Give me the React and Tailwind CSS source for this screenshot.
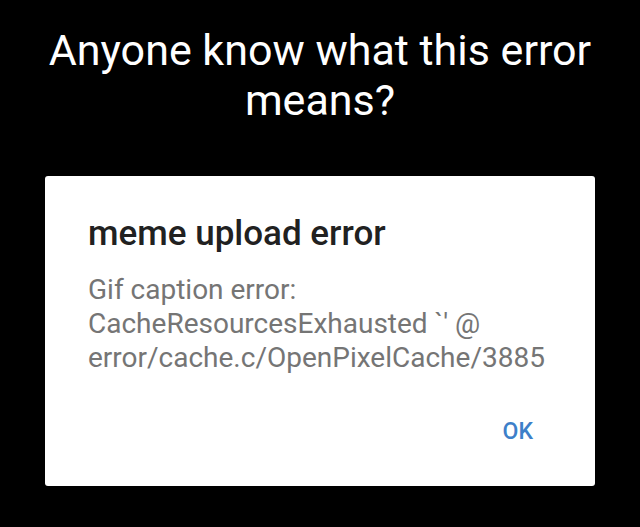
import React from "react";

const App = () => {
  return (
    <div
      className="w-[640px] h-[527px] bg-black overflow-hidden"
      style={{ fontFamily: "Roboto, 'Noto Sans', sans-serif" }}
    >
      <h1 className="pt-[25px] text-center text-white text-[43px] leading-[50px] px-6">
        Anyone know what this error means?
      </h1>

      <div className="mx-[45px] mt-[51px] w-[550px] h-[310px] bg-white rounded-[3px] flex flex-col">
        <div className="pl-[43px] pr-6 pt-[38px]">
          <h2 className="text-[#212121] font-medium text-[35px] leading-[40px]">
            meme upload error
          </h2>
          <p className="mt-[19px] text-[#757575] text-[28px] leading-[34px]">
            Gif caption error:
            <br />
            CacheResourcesExhausted `' @
            <br />
            error/cache.c/OpenPixelCache/3885
          </p>
        </div>
        <div className="mt-auto flex justify-end pr-[62px] pb-[39px]">
          <button className="text-[#3d7fc9] font-medium text-[23px] leading-[30px]">
            OK
          </button>
        </div>
      </div>
    </div>
  );
};

export default App;
